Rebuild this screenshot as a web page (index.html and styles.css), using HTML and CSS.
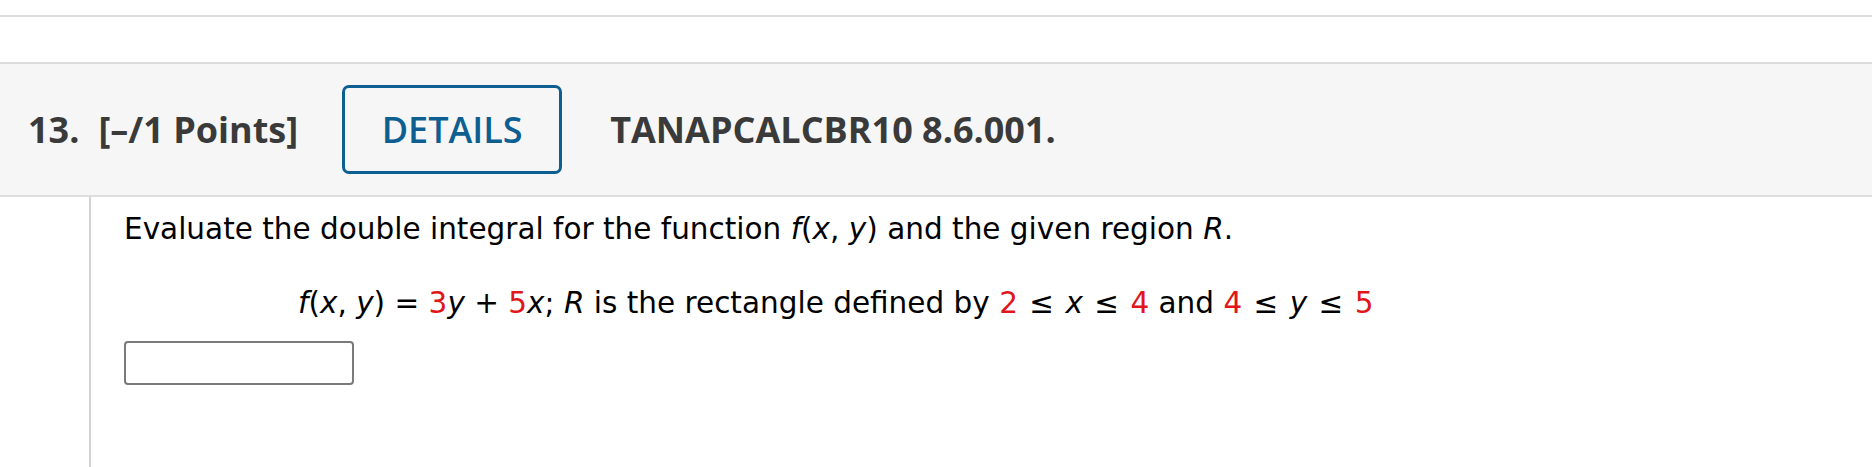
FILE: index.html
```html
<!DOCTYPE html>
<html lang="en">
<head>
<meta charset="utf-8">
<title>Question 13</title>
<link rel="stylesheet" href="styles.css">
</head>
<body>
<div class="page">
  <div class="top-rule"></div>
  <div class="spacer"></div>
  <div class="qheader">
    <span class="qnum">13.</span>
    <span class="qpoints">[–/1 Points]</span>
    <button class="details" type="button">DETAILS</button>
    <span class="qref">TANAPCALCBR10 8.6.001.</span>
  </div>
  <div class="qbody">
    <div class="qcontent">
      <p class="prompt">Evaluate the double integral for the function <i>f</i>(<i>x</i>, <i>y</i>) and the given region <i>R</i>.</p>
      <p class="equation"><i>f</i>(<i>x</i>, <i>y</i>) = <span class="red">3</span><i>y</i> + <span class="red">5</span><i>x</i>; <i>R</i> is the rectangle defined by <span class="red">2</span> <span class="op">≤</span> <i>x</i> <span class="op">≤</span> <span class="red">4</span> and <span class="red">4</span> <span class="op">≤</span> <i>y</i> <span class="op">≤</span> <span class="red">5</span></p>
      <input class="answer" type="text" aria-label="answer">
    </div>
  </div>
</div>
</body>
</html>
```

FILE: styles.css
```css
html, body {
  margin: 0;
  padding: 0;
  background: #ffffff;
}

.page {
  width: 1872px;
  height: 467px;
  overflow: hidden;
  display: flex;
  flex-direction: column;
}

.top-rule {
  height: 15px;
  border-bottom: 2px solid #dddddd;
  background: #ffffff;
}

.spacer {
  height: 45px;
  border-bottom: 2px solid #dddddd;
  background: #ffffff;
}

.qheader {
  height: 131px;
  background: #f6f6f6;
  border-bottom: 2px solid #dddddd;
  display: flex;
  align-items: center;
  padding-left: 28px;
  font-family: "Open Sans", "Liberation Sans", sans-serif;
  color: #3a3a3a;
}

.qnum {
  font-size: 36px;
  font-weight: 700;
}

.qpoints {
  font-size: 36px;
  font-weight: 700;
  margin-left: 19px;
}

.details {
  margin-left: 44px;
  width: 220px;
  height: 89px;
  box-sizing: border-box;
  border: 3px solid #0d5f91;
  border-radius: 7px;
  background: #f6f6f6;
  color: #0d5f91;
  font-family: "Open Sans", "Liberation Sans", sans-serif;
  font-size: 36px;
  font-weight: 600;
  padding: 0;
}

.qref {
  margin-left: 48px;
  font-size: 36px;
  font-weight: 700;
}

.qbody {
  flex: 1;
  padding-left: 89px;
}

.qcontent {
  height: 100%;
  border-left: 2px solid #d2d2d2;
  padding-left: 33px;
  padding-top: 14px;
  font-family: "DejaVu Sans", Verdana, sans-serif;
  font-size: 29.5px;
  color: #000000;
}

.prompt {
  margin: 0;
  line-height: 36px;
}

.equation {
  margin: 38px 0 0 174px;
  line-height: 36px;
}

.op {
  margin: 0 2px;
}

.red {
  color: #e0161b;
}

.answer {
  display: block;
  margin-top: 20px;
  width: 230px;
  height: 44px;
  box-sizing: border-box;
  border: 2px solid #7a7a7a;
  border-radius: 4px;
  background: #ffffff;
}
```
